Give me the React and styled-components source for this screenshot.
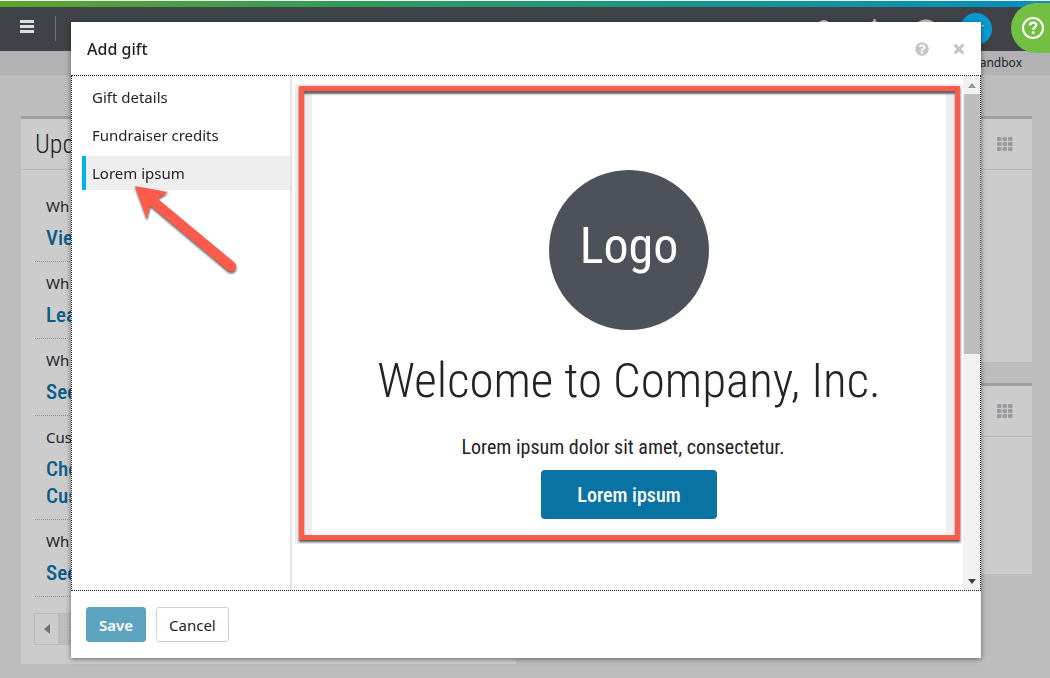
import React from 'react'
import styled, { createGlobalStyle } from 'styled-components';
import { FaQuestionCircle, FaTimes, FaBell, FaSearch, FaComment } from 'react-icons/fa';

const tasks = [
    { label: 'Wh', titles: ['Vie'] },
    { label: 'Wh', titles: ['Lea'] },
    { label: 'Wh', titles: ['See'] },
    { label: 'Cus', titles: ['Che', 'Cus'] },
    { label: 'Wh', titles: ['See'] },
]

const tabs = ['Gift details', 'Fundraiser credits', 'Lorem ipsum']

const GridIcon = () => (
    <svg width="16" height="14" viewBox="0 0 16 14" fill="#999b9e" aria-hidden="true">
        {[0, 5, 10].map(y => [0, 5.5, 11].map(x => (
            <rect key={`${x}-${y}`} x={x} y={y} width="4.500" height="4" rx="1" />
        )))}
    </svg>
)

const SideCard = ({ $body }) => (
    <Card>
        <CardHeader $end>
            <PlainButton aria-label="Options"><GridIcon /></PlainButton>
        </CardHeader>
        <CardSpace $height={$body} />
    </Card>
)

const Backdrop = () => (
    <Page>
        <GradientBar />
        <TopBar>
            <PlainButton aria-label="Menu">
                <svg width="14" height="13" viewBox="0 0 14 13" fill="#dcdddf">
                    <rect width="14" height="3" y="0" />
                    <rect width="14" height="3" y="5" />
                    <rect width="14" height="3" y="10" />
                </svg>
            </PlainButton>
            <Divider />
            <Tools>
                <FaSearch size={17} />
                <FaBell size={19} />
                <FaComment size={22} />
                <Avatar>LT</Avatar>
            </Tools>
            <HelpTab aria-label="Help">
                <svg width="24" height="24" viewBox="0 0 24 24" fill="none" stroke="#fff">
                    <circle cx="12" cy="12" r="10" strokeWidth="2" />
                    <path d="M8.9 9.4C9 7.4 10.3 6.6 12 6.6c1.9 0 3.2 1 3.2 2.6 0 2.1-3 2.3-3 4.6" strokeWidth="2.4" />
                    <path d="M12.1 15.4v2.5" strokeWidth="2.6" />
                </svg>
            </HelpTab>
        </TopBar>
        <SubBar>Sandbox</SubBar>
        <Columns>
            <Column>
                <Card>
                    <CardHeader><h2>Upd</h2></CardHeader>
                    <TaskList>
                        {tasks.map((task, i) => (
                            <Task key={i}>
                                <p>{task.label}</p>
                                <a href="#task">
                                    {task.titles.map(t => <span key={t}>{t}</span>)}
                                </a>
                            </Task>
                        ))}
                    </TaskList>
                    <Pager>
                        <PageButton aria-label="Previous page">
                            <svg width="6" height="10" viewBox="0 0 6 10" fill="#6e7073"><path d="M6 0v10L0 5z" /></svg>
                        </PageButton>
                        <PageButton $current>1</PageButton>
                    </Pager>
                </Card>
            </Column>
            <Column>
                <SideCard $body={192} />
                <SideCard $body={137} />
            </Column>
        </Columns>
    </Page>
)

const Pointer = () => (
    <PointerSvg width="110" height="96" viewBox="0 0 110 96">
        <path
            d="M3 3L36 9L25.500 15.500L102.500 79.500A5 5 0 0 1 96 87.500L18.500 22.500L15 36Z"
            fill="#ff5a4c"
        />
    </PointerSvg>
)

export default function App() {
    return (
        <>
            <GlobalStyle />
            <Backdrop />
            <Overlay>
                <Modal role="dialog" aria-labelledby="modal-title">
                    <ModalHeader>
                        <h1 id="modal-title">Add gift</h1>
                        <PlainButton aria-label="Help"><FaQuestionCircle size={14} /></PlainButton>
                        <PlainButton aria-label="Close"><FaTimes size={14} stroke="currentColor" strokeWidth="30" /></PlainButton>
                    </ModalHeader>
                    <ModalBody>
                        <Sidebar>
                            {tabs.map((tab, i) => (
                                <Tab key={tab} $active={i === 2}>{tab}</Tab>
                            ))}
                            <Pointer />
                        </Sidebar>
                        <Content>
                            <Mat>
                                <Frame>
                                    <Logo>Logo</Logo>
                                    <Title>Welcome to Company, Inc.</Title>
                                    <Intro>Lorem ipsum dolor sit amet, consectetur.</Intro>
                                    <CallToAction>Lorem ipsum</CallToAction>
                                </Frame>
                            </Mat>
                        </Content>
                        <ScrollBar>
                            <ScrollEnd>
                                <svg width="8" height="5" viewBox="0 0 8 5" fill="#969696"><path d="M0 5h8L4 0z" /></svg>
                            </ScrollEnd>
                            <Thumb />
                            <ScrollEnd $last>
                                <svg width="8" height="5" viewBox="0 0 8 5" fill="#404040"><path d="M0 0h8L4 5z" /></svg>
                            </ScrollEnd>
                        </ScrollBar>
                    </ModalBody>
                    <ModalFooter>
                        <Button $primary>Save</Button>
                        <Button>Cancel</Button>
                    </ModalFooter>
                </Modal>
            </Overlay>
        </>
    )
}


const GlobalStyle = createGlobalStyle`
* {
    box-sizing: border-box;
}
body {
    margin: 0;
    background: #bdbdbd;
    color: #212327;
    font-family: 'Noto Sans', 'Open Sans', sans-serif;
    font-size: 15px;
    overflow: hidden;
}
h1, h2, p, ul {
    margin: 0;
    padding: 0;
}
button {
    font-family: inherit;
    font-size: inherit;
}
`

const condensed = `'Roboto Condensed', 'Open Sans Condensed', sans-serif`

const Page = styled.div`
    border-top: 1px solid #f4f2f5;
`

const PlainButton = styled.button`
    display: flex;
    padding: 0;
    border: 0;
    background: none;
    color: inherit;
`

const GradientBar = styled.div`
    height: 6px;
    background: linear-gradient(90deg, #5fa32c, #2f9a5c 35%, #12959a 75%, #008fc4);
`

const TopBar = styled.header`
    display: flex;
    align-items: center;
    height: 44px;
    padding: 0 0 6px 20px;
    background: #3f4247;
`

const Divider = styled.span`
    width: 1px;
    height: 25px;
    margin: 4px 0 0 21px;
    background: #6c6f73;
`

const Tools = styled.div`
    display: flex;
    flex: 1;
    align-items: center;
    justify-content: flex-end;
    gap: 31px;
    padding: 5px 19px 0 0;
    color: #c9cacc;
`

const Avatar = styled.span`
    display: flex;
    align-items: center;
    justify-content: center;
    width: 32px;
    height: 32px;
    margin-left: -8px;
    border-radius: 50%;
    background: #0a9ad2;
    color: #b9c6cf;
`

const HelpTab = styled.button`
    display: flex;
    align-items: center;
    justify-content: center;
    flex: none;
    width: 39px;
    height: 50px;
    margin-top: 4px;
    padding: 0 0 0 5px;
    border: 0;
    border-radius: 25px 0 0 25px;
    background: #72bf44;
`

const SubBar = styled.div`
    height: 24px;
    padding-right: 28px;
    background: #b2b2b4;
    font-size: 12px;
    line-height: 24px;
    text-align: right;
`

const Columns = styled.main`
    display: grid;
    grid-template-columns: 1fr 1fr;
    gap: 22px;
    padding: 41px 18px 14px 21px;
`

const Column = styled.div`
    display: flex;
    flex-direction: column;
    gap: 21px;
`

const Card = styled.section`
    border-top: 3px solid #a0a0a0;
    background: #cccccc;
`

const CardHeader = styled.header`
    display: flex;
    align-items: center;
    justify-content: ${p => p.$end ? 'flex-end' : 'flex-start'};
    height: 51px;
    padding: 0 19px 0 14px;
    border-bottom: 1px solid #b5b5b5;
    h2 {
        font-family: ${condensed};
        font-size: 26px;
        font-weight: 300;
    }
`

const CardSpace = styled.div`
    height: ${p => p.$height}px;
`

const TaskList = styled.ul`
    margin: 15px 14px 0;
    list-style: none;
`

const Task = styled.li`
    padding: 10px 11px 9px;
    border-bottom: 1px dotted #8f8f8f;
    p {
        margin-bottom: 8px;
        line-height: 22px;
    }
    a {
        color: #0a5c88;
        font-family: ${condensed};
        font-size: 21px;
        font-weight: 500;
        line-height: 27px;
        text-decoration: none;
    }
    span {
        display: block;
    }
`

const Pager = styled.div`
    display: flex;
    padding: 16px 13px 19px;
`

const PageButton = styled.button`
    display: flex;
    align-items: center;
    justify-content: center;
    width: ${p => p.$current ? 28 : 25}px;
    height: 32px;
    padding: 0;
    border: 1px solid #b9b9b9;
    background: ${p => p.$current ? '#bdbdbd' : '#cccccc'};
    color: #b5651d;
`

const Overlay = styled.div`
    position: fixed;
    inset: 0;
    display: flex;
    padding: 22px 69px 20px 71px;
`

const Modal = styled.section`
    display: flex;
    flex: 1;
    flex-direction: column;
    background: #fff;
    box-shadow: 0 1px 5px rgba(0, 0, 0, 0.5);
`

const ModalHeader = styled.header`
    display: flex;
    align-items: center;
    gap: 23px;
    height: 53px;
    padding: 0 15px 0 16px;
    color: #c5c6c8;
    h1 {
        flex: 1;
        color: #212327;
        font-size: 16px;
        font-weight: 500;
    }
`

const ModalBody = styled.div`
    display: flex;
    flex: 1;
    min-height: 0;
    border: 1px dotted #222;
`

const Sidebar = styled.nav`
    position: relative;
    display: flex;
    flex: none;
    flex-direction: column;
    gap: 4px;
    width: 220px;
    padding: 4px 0 0 10px;
    border-right: 2px solid #e4e4e4;
`

const Tab = styled.button`
    height: 34px;
    padding: 0 6px;
    border: 0;
    border-left: 4px solid ${p => p.$active ? '#00b2ec' : 'transparent'};
    background: ${p => p.$active ? '#eeeeee' : 'none'};
    color: #212327;
    text-align: left;
`

const PointerSvg = styled.svg`
    position: absolute;
    top: 107px;
    left: 60px;
    filter: drop-shadow(0 2px 1px rgba(0, 0, 0, 0.6));
`

const Content = styled.div`
    flex: 1;
    padding: 8px 1px 0 3px;
    overflow: hidden;
`

const Mat = styled.div`
    padding: 2px 2px 4px 4px;
    background: #eeeeee;
`

const Frame = styled.article`
    display: flex;
    flex-direction: column;
    align-items: center;
    padding: 79px 9px 16px 8px;
    border: 5px solid #ff5a4c;
    background: linear-gradient(90deg, #eee 8px, #fff 8px, #fff calc(100% - 9px), #eee calc(100% - 9px));
    box-shadow: 0 2px 2px #555, inset 0 3px 2px #666;
`

const Logo = styled.div`
    display: flex;
    align-items: center;
    justify-content: center;
    width: 160px;
    height: 160px;
    padding-bottom: 8px;
    border-radius: 50%;
    background: #4d515a;
    color: #fff;
    font-family: ${condensed};
    font-size: 50px;
`

const Title = styled.h2`
    margin-top: 15px;
    font-family: ${condensed};
    font-size: 49px;
    font-weight: 350;
    line-height: 72px;
    white-space: nowrap;
`

const Intro = styled.p`
    margin-top: 16px;
    padding-right: 12px;
    font-family: ${condensed};
    font-size: 20px;
    line-height: 28px;
`

const CallToAction = styled.button`
    width: 176px;
    height: 49px;
    margin-top: 9px;
    border: 0;
    border-radius: 4px;
    background: #0974a3;
    color: #fff;
    font-family: ${condensed};
    font-size: 20px;
    font-weight: 500;
`

const ScrollBar = styled.div`
    display: flex;
    flex: none;
    flex-direction: column;
    width: 17px;
    padding-left: 1px;
    background: #f1f1f1;
`

const ScrollEnd = styled.div`
    display: flex;
    align-items: center;
    justify-content: center;
    height: 18px;
    margin-top: ${p => p.$last ? 'auto' : 0};
`

const Thumb = styled.div`
    height: 260px;
    background: #bebebe;
`

const ModalFooter = styled.footer`
    display: flex;
    align-items: center;
    gap: 10px;
    height: 67px;
    padding: 0 15px;
`

const Button = styled.button`
    height: 35px;
    padding: 0 12px;
    border: 1px solid ${p => p.$primary ? '#5ea4c1' : '#cdcfd2'};
    border-radius: 3px;
    background: ${p => p.$primary ? '#5ea4c1' : '#fff'};
    color: ${p => p.$primary ? '#fff' : '#212327'};
    font-weight: ${p => p.$primary ? 600 : 400};
`
